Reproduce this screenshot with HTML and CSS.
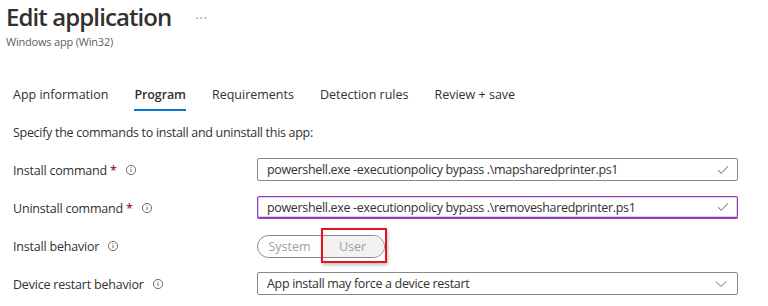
FILE: index.html
```html
<!DOCTYPE html>
<html>
<head>
<meta charset="utf-8">
<link rel="stylesheet" href="styles.css">
</head>
<body>
<div class="page">
  <header class="header">
    <div class="title-row">
      <h1 class="title">Edit application</h1>
      <span class="more">···</span>
    </div>
    <div class="subtitle">Windows app (Win32)</div>
  </header>
  <nav class="tabs">
    <span class="tab">App information</span>
    <span class="tab active">Program</span>
    <span class="tab">Requirements</span>
    <span class="tab">Detection rules</span>
    <span class="tab">Review + save</span>
  </nav>
  <p class="intro">Specify the commands to install and uninstall this app:</p>
  <div class="form">
    <div class="label">Install command <span class="req">*</span>
      <svg class="info" viewBox="0 0 12 12"><circle cx="6" cy="6" r="4.6" fill="none" stroke="#605e5c" stroke-width="0.9"/><rect x="5.55" y="5" width="0.9" height="3.2" fill="#605e5c"/><circle cx="6" cy="3.8" r="0.55" fill="#605e5c"/></svg>
    </div>
    <div class="field">
      <span class="value">powershell.exe -executionpolicy bypass .\mapsharedprinter.ps1</span>
      <svg class="check" viewBox="0 0 12 10"><path d="M1 5.2 L4.2 8.2 L11 1.5" fill="none" stroke="#605e5c" stroke-width="1"/></svg>
    </div>

    <div class="label">Uninstall command <span class="req">*</span>
      <svg class="info" viewBox="0 0 12 12"><circle cx="6" cy="6" r="4.6" fill="none" stroke="#605e5c" stroke-width="0.9"/><rect x="5.55" y="5" width="0.9" height="3.2" fill="#605e5c"/><circle cx="6" cy="3.8" r="0.55" fill="#605e5c"/></svg>
    </div>
    <div class="field focused">
      <span class="value">powershell.exe -executionpolicy bypass .\removesharedprinter.ps1</span>
      <svg class="check" viewBox="0 0 12 10"><path d="M1 5.2 L4.2 8.2 L11 1.5" fill="none" stroke="#605e5c" stroke-width="1"/></svg>
    </div>

    <div class="label">Install behavior
      <svg class="info" viewBox="0 0 12 12"><circle cx="6" cy="6" r="4.6" fill="none" stroke="#605e5c" stroke-width="0.9"/><rect x="5.55" y="5" width="0.9" height="3.2" fill="#605e5c"/><circle cx="6" cy="3.8" r="0.55" fill="#605e5c"/></svg>
    </div>
    <div class="toggle-cell">
      <div class="toggle">
        <span class="seg">System</span>
        <span class="seg selected">User</span>
        <span class="highlight"></span>
      </div>
    </div>

    <div class="label">Device restart behavior
      <svg class="info" viewBox="0 0 12 12"><circle cx="6" cy="6" r="4.6" fill="none" stroke="#605e5c" stroke-width="0.9"/><rect x="5.55" y="5" width="0.9" height="3.2" fill="#605e5c"/><circle cx="6" cy="3.8" r="0.55" fill="#605e5c"/></svg>
    </div>
    <div class="field">
      <span class="value">App install may force a device restart</span>
      <svg class="chev" viewBox="0 0 16 10"><path d="M1.5 2 L8 8 L14.5 2" fill="none" stroke="#605e5c" stroke-width="1.1"/></svg>
    </div>
  </div>
</div>
</body>
</html>
```
FILE: styles.css
```css
* { box-sizing: border-box; }
html, body { margin: 0; padding: 0; background: #ffffff; }
body {
  font-family: "Open Sans", "Noto Sans", sans-serif;
  color: #323130;
  width: 768px;
  height: 306px;
  overflow: hidden;
}
.header { padding: 0 0 0 6px; }
.title-row { display: flex; align-items: center; gap: 24px; height: 34px; }
.title {
  margin: 0;
  font-size: 24px;
  font-weight: 600;
  letter-spacing: -0.9px;
  color: #323130;
  line-height: 34px;
}
.more { color: #8a8886; font-size: 12px; letter-spacing: 1px; margin-top: 2px; }
.subtitle { font-size: 11px; color: #605e5c; line-height: 14px; margin-top: 1px; letter-spacing: -0.2px; }
.tabs {
  display: flex;
  gap: 26px;
  margin-top: 35px;
  padding-left: 13px;
  height: 28px;
}
.tab {
  font-size: 12.5px;
  color: #323130;
  line-height: 22px;
  letter-spacing: 0;
  position: relative;
}
.tab.active { font-weight: 600; letter-spacing: -0.1px; }
.tab.active::after {
  content: "";
  position: absolute;
  left: 0;
  right: 0;
  top: 25px;
  height: 2px;
  background: #0078d4;
}
.intro {
  margin: 13px 0 0 13px;
  font-size: 12.5px;
  color: #323130;
  line-height: 16px;
  letter-spacing: -0.3px;
}
.form {
  display: grid;
  grid-template-columns: 257px 481px;
  grid-auto-rows: 38px;
  margin-top: 17px;
}
.label {
  display: flex;
  align-items: center;
  padding-left: 13px;
  font-size: 12.5px;
  color: #323130;
  letter-spacing: -0.2px;
  height: 24px;
}
.req { color: #a4262c; margin-left: 3px; font-weight: 600; }
.info { width: 12px; height: 12px; margin-left: 8px; }
.field {
  display: flex;
  align-items: center;
  justify-content: space-between;
  height: 23px;
  border: 1px solid #8a8886;
  border-radius: 2px;
  padding: 0 8px 0 9px;
}
.field.focused { border-color: #8f3fb7; border-width: 1px 1px 2px 1px; box-shadow: inset 0 0 0 0.5px #c79be0; }
.value { font-size: 12.5px; color: #323130; letter-spacing: -0.33px; white-space: nowrap; }
.check { width: 12px; height: 10px; }
.chev { width: 14px; height: 8px; margin-right: 1px; }
.toggle-cell { padding-top: 1px; }
.toggle {
  position: relative;
  display: flex;
  width: 128px;
  height: 23px;
  border: 1px solid #8a8886;
  border-radius: 12px;
}
.seg {
  flex: 0 0 auto;
  display: flex;
  align-items: center;
  justify-content: center;
  font-size: 12.5px;
  color: #a19f9d;
}
.seg:first-child { width: 63px; }
.seg.selected { width: 63px; background: #f3f2f1; border-radius: 0 11px 11px 0; }
.highlight {
  position: absolute;
  left: 63px;
  top: -8px;
  width: 66px;
  height: 35px;
  border: 2px solid #e81123;
  box-shadow: 1px 2px 3px rgba(0,0,0,0.25);
}
```
